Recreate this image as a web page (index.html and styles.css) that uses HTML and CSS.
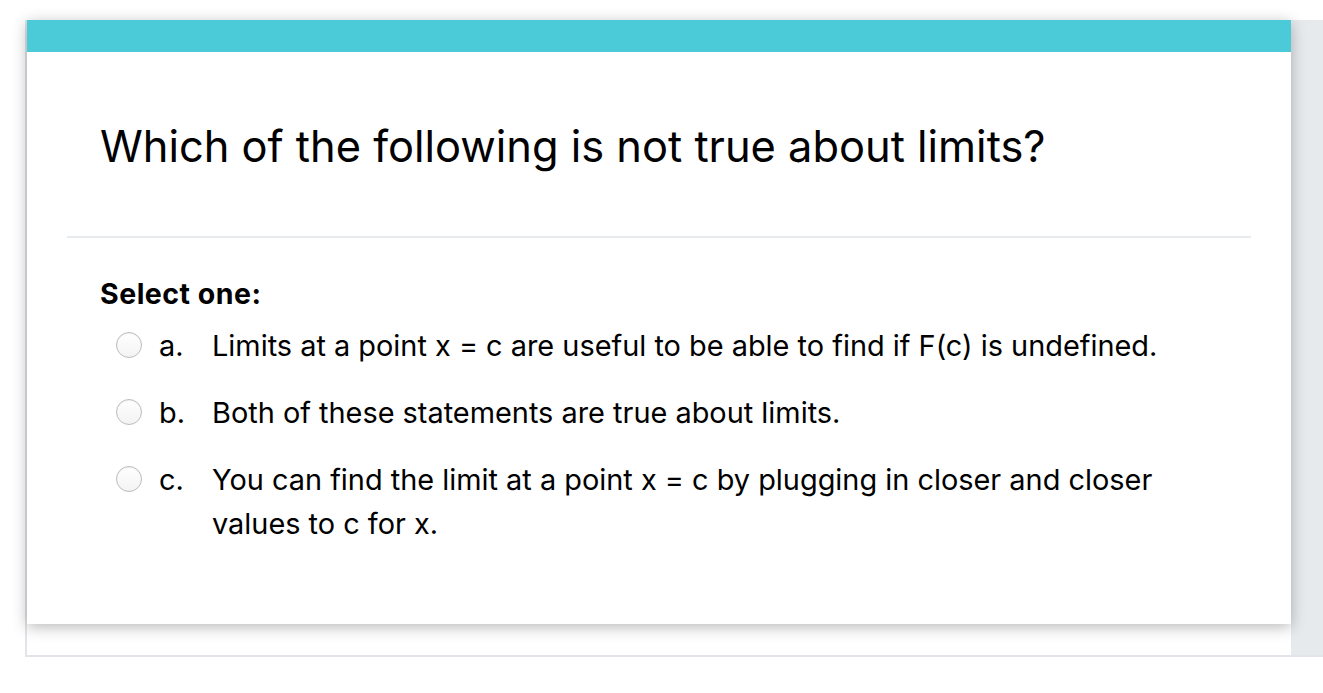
FILE: index.html
```html
<!DOCTYPE html>
<html>
<head>
<meta charset="utf-8">
<link rel="stylesheet" href="styles.css">
</head>
<body>
<div class="frame">
  <div class="card">
    <div class="card-bar"></div>
    <div class="card-body">
      <h1 class="question">Which of the following is not true about limits?</h1>
      <hr class="divider">
      <div class="prompt">Select one:</div>
      <div class="answers">
        <label class="answer">
          <span class="radio"></span>
          <span class="letter">a.</span>
          <span class="text">Limits at a point x = c are useful to be able to find if F(c) is undefined.</span>
        </label>
        <label class="answer">
          <span class="radio"></span>
          <span class="letter">b.</span>
          <span class="text">Both of these statements are true about limits.</span>
        </label>
        <label class="answer">
          <span class="radio"></span>
          <span class="letter">c.</span>
          <span class="text">You can find the limit at a point x = c by plugging in closer and closer<br>values to c for x.</span>
        </label>
      </div>
    </div>
  </div>
  <div class="side"></div>
</div>
</body>
</html>
```
FILE: styles.css
```css
html, body {
  margin: 0;
  padding: 0;
  background: #ffffff;
  font-family: Inter, "Liberation Sans", Arial, sans-serif;
  color: #000000;
}

.frame {
  margin: 20px 0 0 25px;
  height: 635px;
  display: flex;
  border-left: 2px solid #e1e4e8;
  border-bottom: 2px solid #e1e4e8;
}

.card {
  width: 1264px;
  height: 604px;
  background: #ffffff;
  box-shadow: 0 3px 14px rgba(0, 0, 0, 0.28);
  position: relative;
  z-index: 1;
  display: flex;
  flex-direction: column;
}

.card-bar {
  height: 32px;
  background: #4bcad8;
}

.card-body {
  padding: 0 40px 0 40px;
}

.question {
  margin: 66px 0 0 33px;
  font-size: 43.4px;
  font-weight: normal;
  line-height: 56px;
}

.divider {
  margin: 62px 0 0 0;
  border: 0;
  height: 2px;
  background: #e8ebee;
}

.prompt {
  margin: 38px 0 0 33px;
  font-size: 28.5px;
  font-weight: bold;
  line-height: 36px;
  letter-spacing: 0.5px;
}

.answers {
  margin: 12px 0 0 49px;
  display: flex;
  flex-direction: column;
  gap: 23px;
}

.answer {
  display: flex;
  align-items: flex-start;
  font-size: 28.9px;
  line-height: 44px;
}

.radio {
  flex: none;
  width: 26px;
  height: 26px;
  margin-top: 8px;
  border-radius: 50%;
  border: 1px solid #bcbcbc;
  box-sizing: border-box;
  background: linear-gradient(#ffffff, #f3f3f3);
  box-shadow: inset 0 1px 1px rgba(0,0,0,0.06);
}

.letter {
  width: 53px;
  margin-left: 17px;
  flex: none;
}

.text {
  flex: 1;
}

.side {
  flex: 1;
  background: #e7eaed;
}
```
